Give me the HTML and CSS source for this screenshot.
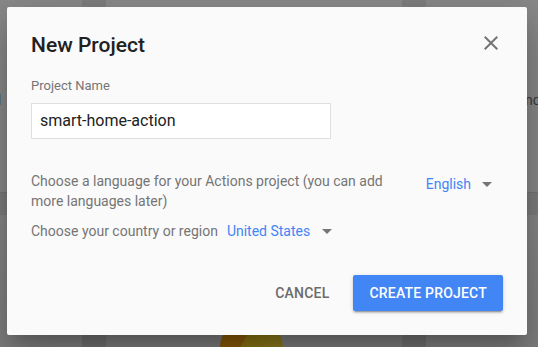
FILE: index.html
```html
<!DOCTYPE html>
<html>
<head>
<meta charset="utf-8">
<link rel="stylesheet" href="styles.css">
</head>
<body>
<div class="backdrop">
  <div class="col col-side">
    <div class="side-top"><span class="peek peek-left">l</span></div>
    <div class="side-band"></div>
    <div class="side-bottom"></div>
  </div>
  <div class="col strip"></div>
  <div class="col col-center">
    <div class="blob"></div>
  </div>
  <div class="col strip"></div>
  <div class="col col-side">
    <div class="side-top"><span class="peek peek-right">nc</span></div>
    <div class="side-band"></div>
    <div class="side-bottom"></div>
  </div>
</div>

<div class="dialog">
  <div class="header">
    <h1 class="title">New Project</h1>
    <svg class="close" viewBox="0 0 24 24" width="24" height="24"><path d="M19 6.41L17.59 5 12 10.59 6.41 5 5 6.41 10.59 12 5 17.59 6.41 19 12 13.41 17.59 19 19 17.59 13.41 12z" fill="#757575"/></svg>
  </div>
  <div class="label">Project Name</div>
  <div class="input">smart-home-action</div>
  <div class="lang-row">
    <div class="lang-text">Choose a language for your Actions project (you can add more languages later)</div>
    <div class="select select-lang">
      <span class="select-value">English</span>
      <svg class="arrow" viewBox="7 10 10 5" width="10" height="5"><path d="M7 10l5 5 5-5z" fill="#757575"/></svg>
    </div>
  </div>
  <div class="country-row">
    <span class="country-text">Choose your country or region</span>
    <div class="select select-country">
      <span class="select-value">United States</span>
      <svg class="arrow" viewBox="7 10 10 5" width="10" height="5"><path d="M7 10l5 5 5-5z" fill="#757575"/></svg>
    </div>
  </div>
  <div class="actions">
    <button class="btn btn-flat">CANCEL</button>
    <button class="btn btn-raised">CREATE PROJECT</button>
  </div>
</div>
</body>
</html>
```

FILE: styles.css
```css
* { box-sizing: border-box; }
html, body {
  margin: 0;
  padding: 0;
  overflow: hidden;
}
body {
  width: 538px;
  height: 347px;
  position: relative;
  font-family: Roboto, "Liberation Sans", sans-serif;
  background: #858585;
}
.backdrop {
  display: grid;
  grid-template-columns: 82px 24px 296px 24px 112px;
  height: 347px;
  overflow: hidden;
}
.col { height: 100%; overflow: hidden; }
.strip {
  background: linear-gradient(#7f7f7f, #7b7b7b 60%, #727272);
}
.col-side {
  display: flex;
  flex-direction: column;
}
.side-top {
  height: 192px;
  flex: none;
  background: #8a8a8a;
  position: relative;
}
.side-band {
  height: 23px;
  flex: none;
  background: #7e7e7e;
  border-top: 1px solid #767676;
}
.side-bottom {
  flex: 1;
  background: linear-gradient(#878787, #808080);
}
.col-center {
  background: linear-gradient(#8c8c8c, #868686 70%, #7e7e7e);
  display: flex;
  flex-direction: column;
  justify-content: flex-end;
  padding-left: 114px;
}
.blob {
  flex: none;
  width: 63px;
  height: 27px;
  border-radius: 32px 32px 0 0;
  background: linear-gradient(120deg, #8a5a08 0%, #8a5a08 45%, #8a7410 46%, #8c7a22 100%);
}
.peek {
  position: absolute;
  top: 92px;
  font-size: 14px;
  color: #3f4a66;
}
.peek-left { left: -2px; color: #4a5a80; }
.peek-right { left: 99px; color: #3a3a3a; }

.dialog {
  position: absolute;
  left: 7px;
  top: 7px;
  width: 520px;
  height: 328px;
  background: #fafafa;
  border-radius: 2px;
  padding: 24px;
  box-shadow: 0 11px 15px -7px rgba(0,0,0,0.2), 0 24px 38px 3px rgba(0,0,0,0.14), 0 9px 46px 8px rgba(0,0,0,0.12);
  display: flex;
  flex-direction: column;
}
.header {
  display: flex;
  justify-content: space-between;
  align-items: flex-start;
}
.title {
  margin: 0;
  font-size: 21px;
  line-height: 28px;
  font-weight: 500;
  color: #212121;
}
.close { display: block; }
.label {
  margin-top: 17px;
  font-size: 13px;
  line-height: 20px;
  color: #757575;
}
.input {
  margin-top: 7px;
  width: 300px;
  height: 36px;
  border: 1px solid #e0e0e0;
  background: #fff;
  padding: 0 8px;
  font-size: 16px;
  line-height: 34px;
  color: #212121;
}
.lang-row {
  margin-top: 32px;
  display: flex;
  align-items: flex-start;
}
.lang-text {
  width: 370px;
  font-size: 14px;
  line-height: 20px;
  color: #757575;
}
.select {
  display: flex;
  align-items: center;
  font-size: 14px;
  line-height: 20px;
  color: #4285f4;
}
.select .arrow { display: block; }
.select-lang {
  margin-left: auto;
  margin-right: 11px;
  margin-top: 3px;
  gap: 11px;
}
.country-row {
  margin-top: 10px;
  display: flex;
  align-items: center;
  font-size: 14px;
  line-height: 20px;
  color: #757575;
}
.select-country {
  margin-left: 9px;
  gap: 12px;
}
.actions {
  margin-top: auto;
  display: flex;
  justify-content: flex-end;
  gap: 8px;
}
.btn {
  height: 36px;
  padding: 0 16px;
  border: none;
  border-radius: 2px;
  font-family: Roboto, "Liberation Sans", sans-serif;
  font-size: 14px;
  font-weight: 500;
  letter-spacing: 0.2px;
  line-height: 36px;
  cursor: pointer;
}
.btn-flat {
  background: transparent;
  color: #6b6b6b;
}
.btn-raised {
  background: #4285f4;
  color: #fff;
  box-shadow: 0 2px 2px 0 rgba(0,0,0,0.14), 0 1px 5px 0 rgba(0,0,0,0.12), 0 3px 1px -2px rgba(0,0,0,0.2);
}
```
